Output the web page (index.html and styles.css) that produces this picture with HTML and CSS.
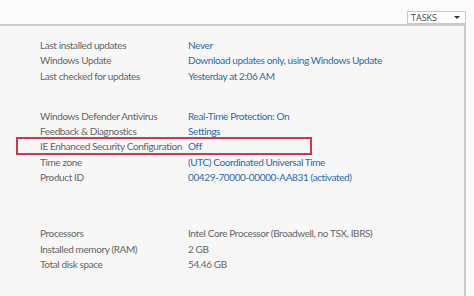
FILE: index.html
```html
<!DOCTYPE html>
<html>
<head>
<meta charset="utf-8">
<link rel="stylesheet" href="styles.css">
</head>
<body>
<div class="header">
  <div class="tasks">TASKS <span class="caret"></span></div>
</div>
<div class="panel">
  <div class="group g1">
    <div class="row"><span class="label">Last installed updates</span><span class="value">Never</span></div>
    <div class="row"><span class="label">Windows Update</span><span class="value">Download updates only, using Windows Update</span></div>
    <div class="row"><span class="label">Last checked for updates</span><span class="value">Yesterday at 2:06 AM</span></div>
  </div>
  <div class="group g2">
    <div class="row"><span class="label">Windows Defender Antivirus</span><span class="value">Real-Time Protection: On</span></div>
    <div class="row"><span class="label">Feedback &amp; Diagnostics</span><span class="value">Settings</span></div>
    <div class="row highlight"><span class="label">IE Enhanced Security Configuration</span><span class="value">Off</span><span class="mark"></span></div>
    <div class="row"><span class="label">Time zone</span><span class="value">(UTC) Coordinated Universal Time</span></div>
    <div class="row"><span class="label">Product ID</span><span class="value">00429-70000-00000-AA831 (activated)</span></div>
  </div>
  <div class="group g3">
    <div class="row"><span class="label">Processors</span><span class="value plain">Intel Core Processor (Broadwell, no TSX, IBRS)</span></div>
    <div class="row"><span class="label">Installed memory (RAM)</span><span class="value plain">2 GB</span></div>
    <div class="row"><span class="label">Total disk space</span><span class="value plain">54.46 GB</span></div>
  </div>
</div>
</body>
</html>
```
FILE: styles.css
```css
html, body {
  margin: 0;
  padding: 0;
  background: #fbfbfb;
  font-family: "Lato", "Noto Sans", sans-serif;
  font-size: 10px;
  color: #666;
}
.header {
  height: 24px;
  width: 466px;
  display: flex;
  justify-content: flex-end;
  align-items: flex-start;
}
.tasks {
  margin-top: 11px;
  width: 54px;
  height: 11px;
  border: 1px solid #c9c9c9;
  background: #fff;
  font-family: "Open Sans", sans-serif;
  font-size: 9px;
  line-height: 11px;
  color: #444;
  display: flex;
  align-items: center;
  padding-left: 3px;
  justify-content: space-between;
}
.caret {
  width: 0;
  height: 0;
  border-left: 3px solid transparent;
  border-right: 3px solid transparent;
  border-top: 3px solid #333;
  margin-right: 5px;
}
.panel {
  width: 424px;
  height: 264px;
  border-top: 2px solid #cbcbcb;
  border-right: 2px solid #cbcbcb;
  border-bottom: 2px solid #cbcbcb;
  background: #f7f7f7;
  padding-left: 40px;
  padding-top: 12px;
}
.group { display: flex; flex-direction: column; }
.g2 { margin-top: 25px; }
.g3 { margin-top: 41px; }
.row {
  display: grid;
  grid-template-columns: 148px auto;
  height: 15.3px;
  line-height: 15px;
  white-space: nowrap;
  letter-spacing: -0.38px;
  position: relative;
}
.value { color: #2a6ab0; }
.value.plain { color: #666; }
.mark {
  position: absolute;
  left: -24px;
  top: -2px;
  width: 292px;
  height: 14px;
  border: 2px solid #d8324c;
}
```
